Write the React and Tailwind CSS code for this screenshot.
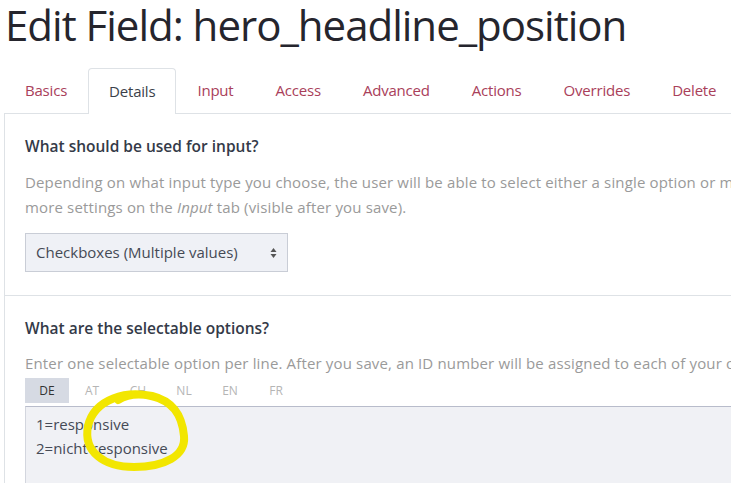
import React from 'react';

const tabs = ['Basics', 'Details', 'Input', 'Access', 'Advanced', 'Actions', 'Overrides', 'Delete'];
const langs = ['DE', 'AT', 'CH', 'NL', 'EN', 'FR'];

export default function App() {
  return (
    <div className="relative w-[737px] h-[483px] overflow-hidden bg-white font-['Open_Sans',sans-serif]">
      <h1 className="h-[68px] pl-[5px] pt-[1px] text-[42px] leading-[48px] tracking-[-1px] font-normal text-[#25252d] whitespace-nowrap">
        Edit Field: hero_headline_position
      </h1>

      <div className="w-[731px] overflow-hidden pl-[4px]">
        <ul className="flex border-b border-[#dee2e6] w-[727px]">
          {tabs.map((t) => (
            <li
              key={t}
              className={
                t === 'Details'
                  ? 'px-[20px] h-[46px] -mb-px flex items-center text-[15px] tracking-[-0.2px] text-[#3b3f4a] bg-white border border-b-0 border-[#dee2e6] rounded-t-[4px]'
                  : 'px-[20px] h-[45px] flex items-center text-[15px] tracking-[-0.2px] text-[#a9405a] border border-transparent'
              }
            >
              {t}
            </li>
          ))}
        </ul>

        <div className="w-[900px] border-l border-[#dee2e6]">
          <section className="pl-[20px] pt-[22px] pb-[23px] border-b border-[#dee2e6]">
            <h2 className="text-[15.5px] leading-[21px] font-semibold text-[#343a48]">What should be used for input?</h2>
            <p className="mt-[13px] text-[15px] leading-[25px] tracking-[0.15px] text-[#9a9a9a] whitespace-nowrap">
              Depending on what input type you choose, the user will be able to select either a single option or multiple options.
              <br />
              more settings on the <em>Input</em> tab (visible after you save).
            </p>
            <div className="mt-[13px] w-[263px] h-[39px] bg-[#eff1f6] border border-[#c9cdd6] flex items-center justify-between pl-[10px] pr-[10px]">
              <span className="text-[15px] text-[#454a55]">Checkboxes (Multiple values)</span>
              <svg width="7" height="12" viewBox="0 0 7 12">
                <path d="M3.5 1 L6.5 5 L0.5 5 Z" fill="#555" />
                <path d="M3.5 11 L6.5 7 L0.5 7 Z" fill="#555" />
              </svg>
            </div>
          </section>

          <section className="pl-[20px] pt-[22px]">
            <h2 className="text-[15.5px] leading-[21px] font-semibold text-[#343a48]">What are the selectable options?</h2>
            <p className="mt-[12px] text-[15px] leading-[25px] tracking-[0.15px] text-[#9a9a9a] whitespace-nowrap">
              Enter one selectable option per line. After you save, an ID number will be assigned to each of your options.
            </p>
            <div className="mt-[2px] flex">
              {langs.map((l) => (
                <span
                  key={l}
                  className={
                    l === 'DE'
                      ? 'w-[44px] h-[25px] flex items-center justify-center text-[12px] text-[#333] bg-[#d6dae3]'
                      : 'w-[46px] h-[25px] flex items-center justify-center text-[12px] text-[#b5b5b5]'
                  }
                >
                  {l}
                </span>
              ))}
            </div>
            <div className="mt-[3px] w-[706px] h-[90px] bg-[#f0f1f5] border-t border-l border-t-[#b8bccb] border-l-[#d3d6de] pl-[10px] pt-[5px] text-[15px] leading-[24px] text-[#454a55]">
              <div>1=responsive</div>
              <div>2=nicht responsive</div>
            </div>
          </section>
        </div>
      </div>

      <svg className="absolute left-0 top-0 pointer-events-none" width="737" height="483">
        <path
          d="M158 398 C 126 388, 94 400, 88 426 C 83 452, 104 467, 134 467 C 164 467, 186 456, 184 436 C 182 414, 172 401, 152 396 C 138 393, 126 395, 118 400"
          fill="none"
          stroke="#f2e600"
          strokeWidth="8"
          strokeLinecap="round"
        />
      </svg>
    </div>
  );
}
